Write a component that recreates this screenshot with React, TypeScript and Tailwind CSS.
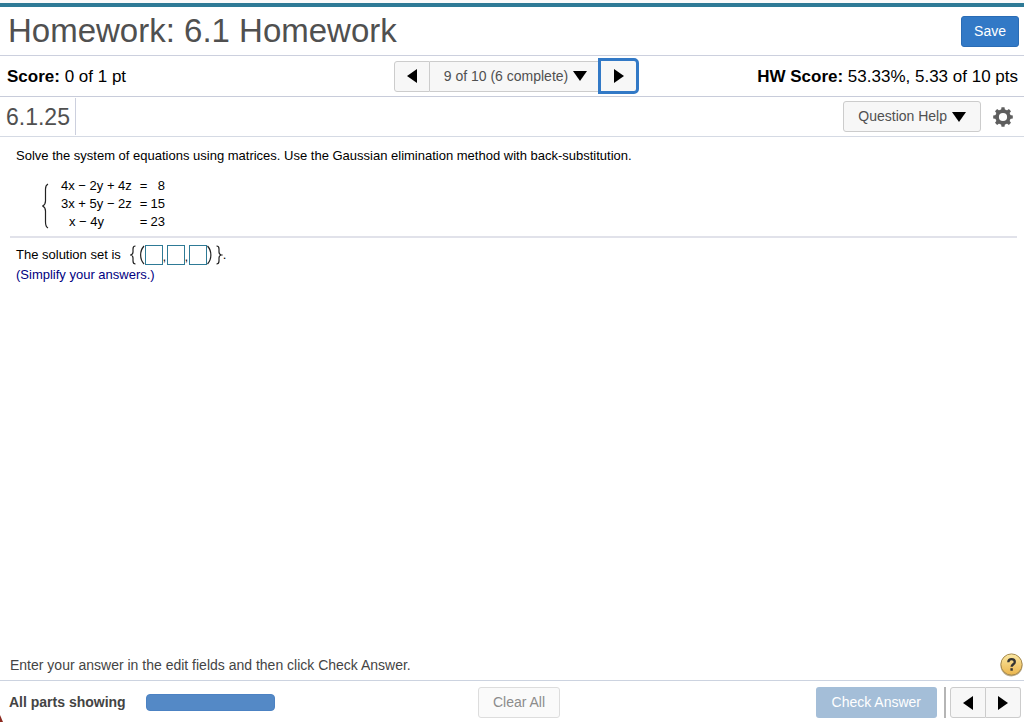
import React, { useState } from "react";

const TEETH = [0, 45, 90, 135, 180, 225, 270, 315];

function Triangle({ dir }: { dir: "left" | "right" | "down" }) {
  if (dir === "down") {
    return (
      <svg width="14" height="10" viewBox="0 0 14 10" aria-hidden="true">
        <path d="M0 0H14L7 10Z" fill="#000" />
      </svg>
    );
  }
  return (
    <svg width="10" height="14" viewBox="0 0 10 14" aria-hidden="true">
      <path d={dir === "left" ? "M10 0V14L0 7Z" : "M0 0V14L10 7Z"} fill="#000" />
    </svg>
  );
}

function Gear() {
  return (
    <svg width="20" height="20" viewBox="0 0 20 20" aria-hidden="true">
      <circle cx="10" cy="10" r="5.9" fill="none" stroke="#5e5e5e" strokeWidth="3.6" />
      {TEETH.map((a) => (
        <path key={a} d="M8 3.4L8.5 0.200H11.500L12 3.400Z" fill="#5e5e5e" transform={`rotate(${a} 10 10)`} />
      ))}
    </svg>
  );
}

function HelpIcon() {
  return (
    <svg width="23" height="24" viewBox="0 0 23 24" aria-hidden="true">
      <defs>
        <linearGradient id="gold" x1="0" y1="0" x2="0" y2="1">
          <stop offset="0" stopColor="#fbe8a4" />
          <stop offset="1" stopColor="#ebb54c" />
        </linearGradient>
      </defs>
      <circle cx="11.5" cy="12.4" r="11" fill="#8f7a4a" opacity="0.6" />
      <circle cx="11.5" cy="11.5" r="10.6" fill="url(#gold)" stroke="#a88b4e" strokeWidth="1" />
      <path
        d="M8.3 9.2C8.4 7.2 9.6 6.2 11.6 6.2C13.6 6.2 14.8 7.3 14.8 8.9C14.8 11.2 11.6 11.3 11.6 13.8"
        fill="none"
        stroke="#333"
        strokeWidth="2.3"
      />
      <rect x="10.4" y="15.2" width="2.4" height="2.5" fill="#333" />
    </svg>
  );
}

function SystemBrace() {
  return (
    <svg
      className="mt-1"
      width="7"
      height="46"
      viewBox="0 0 7 46"
      fill="none"
      stroke="#222"
      strokeWidth="1.2"
      aria-hidden="true"
    >
      <path d="M6 1C4 2 3.5 3.5 3.5 6V18C3.5 20.5 2.5 22 0.7 23C2.5 24 3.5 25.5 3.5 28V39C3.5 42 4 44 6 45" />
    </svg>
  );
}

function Bracket({ d, width }: { d: string; width: number }) {
  return (
    <svg
      width={width}
      height="20"
      viewBox={`0 0 ${width} 20`}
      fill="none"
      stroke="#222"
      strokeWidth="1.2"
      className="shrink-0"
      aria-hidden="true"
    >
      <path d={d} />
    </svg>
  );
}

const BRACE_OPEN = "M5.5 1C3.5 1 3 2 3 4V7C3 8.5 2.5 9.5 0.7 10C2.5 10.5 3 11.5 3 13V16C3 18 3.5 19 5.5 19";
const BRACE_CLOSE = "M3.5 1C5.5 1 6 2 6 4V7C6 8.5 6.500 9.5 8.3 10C6.5 10.5 6 11.5 6 13V16C6 18 5.5 19 3.5 19";

const EQUATIONS = [
  { left: "4x − 2y + 4z", right: "8", indent: "" },
  { left: "3x + 5y − 2z", right: "15", indent: "" },
  { left: "x − 4y", right: "23", indent: "pl-2" },
];

export default function App() {
  const [answers, setAnswers] = useState(["", "", ""]);
  const setAnswer = (i: number, value: string) => setAnswers(answers.map((a, j) => (i === j ? value : a)));

  return (
    <div className="relative flex min-h-screen flex-col bg-white font-['Liberation_Sans',Arial,sans-serif] text-black">
      <div className="h-[3px] bg-[#fafafa]" />
      <header className="flex h-[53px] items-center justify-between border-t-4 border-b border-t-[#2e7a96] border-b-[#ccd0de] pr-[5px] pl-2">
        <h1 className="text-[33px] leading-9 text-[#505050]">Homework: 6.1 Homework</h1>
        <button className="h-[31px] rounded-[3px] border border-[#2a6cb5] bg-[#3279c6] px-3 text-[14px] text-white">Save</button>
      </header>

      <div className="grid h-[41px] grid-cols-[1fr_auto_1fr] items-center border-b border-[#c8ccda] pr-[6px] pl-[7px] text-[17px]">
        <p className="pt-[2px]">
          <b>Score:</b> 0 of 1 pt
        </p>
        <nav aria-label="Questions" className="ml-2 flex items-center">
          <button aria-label="Previous question" className="flex h-[31px] w-9 items-center justify-center rounded-l-[3px] border border-[#ccc] bg-[#f7f7f7]">
            <Triangle dir="left" />
          </button>
          <button className="flex h-[31px] items-center gap-[5px] border-y border-[#ccc] bg-[#f7f7f7] pr-[11px] pl-[14px] text-[14px] text-[#505050]">
            9 of 10 (6 complete) <Triangle dir="down" />
          </button>
          <button aria-label="Next question" className="flex h-9 w-[41px] items-center justify-center rounded-r-[5px] border-3 border-[#3279c6] bg-[#f7f7f7]">
            <Triangle dir="right" />
          </button>
        </nav>
        <p className="pt-[2px] text-right">
          <b>HW Score:</b> 53.33%, 5.33 of 10 pts
        </p>
      </div>

      <div className="flex h-10 items-center justify-between border-b border-[#d5dae4] pr-[11px] pl-[6px]">
        <h2 className="flex h-[37px] items-center border-r border-[#ccd0de] pt-[2px] pr-[5px] text-[23px] text-[#505050]">6.1.25</h2>
        <div className="flex items-center gap-3">
          <button className="flex h-[31px] items-center gap-[5px] rounded-[3px] border border-[#ccc] bg-[#f7f7f7] px-[14px] text-[14px] text-[#505050]">
            Question Help <Triangle dir="down" />
          </button>
          <button aria-label="Settings">
            <Gear />
          </button>
        </div>
      </div>

      <main className="flex-1 pt-[10px] pr-[7px] pl-[10px] text-[13px] leading-[18px]">
        <p className="pl-[6px]">
          Solve the system of equations using matrices. Use the Gaussian elimination method with back-substitution.
        </p>
        <div className="mt-3 flex items-center gap-3 border-b-2 border-[#e1e2ea] pb-[5px] pl-8">
          <SystemBrace />
          <table>
            <tbody>
              {EQUATIONS.map((eq) => (
                <tr key={eq.right}>
                  <td className={`${eq.indent} p-0`}>{eq.left}</td>
                  <td className="py-0 pr-0 pl-2">=</td>
                  <td className="py-0 pr-0 pl-[3px] text-right">{eq.right}</td>
                </tr>
              ))}
            </tbody>
          </table>
        </div>
        <div className="flex items-center pt-[6px] pl-[6px]">
          <span className="mr-[9px]">The solution set is</span>
          <Bracket width={8} d={BRACE_OPEN} />
          <Bracket width={7} d="M6 1C1.5 6 1.5 14 6 19" />
          {answers.map((value, i) => (
            <React.Fragment key={i}>
              {i > 0 && <span className="w-1 pt-1 text-[12px]">,</span>}
              <input
                aria-label={`Answer ${i + 1}`}
                value={value}
                onChange={(e) => setAnswer(i, e.target.value)}
                className="h-5 w-[18px] border border-[#2e7a96] bg-white text-center"
              />
            </React.Fragment>
          ))}
          <Bracket width={6} d="M0.500 1C5 6 5 14 0.500 19" />
          <Bracket width={10} d={BRACE_CLOSE} />
          <span>.</span>
        </div>
        <p className="pl-[6px] text-[#00007f]">(Simplify your answers.)</p>
      </main>

      <div className="flex h-[30px] items-center justify-between pr-[1px] pl-[10px] text-[14px] text-[#444]">
        <p>Enter your answer in the edit fields and then click Check Answer.</p>
        <button aria-label="Help">
          <HelpIcon />
        </button>
      </div>

      <footer className="grid h-[42px] grid-cols-[1fr_auto_1fr] items-center border-t border-[#ccd3e0] pt-[2px] pr-[3px] pl-[9px] text-[14px]">
        <div className="flex items-center gap-5">
          <b className="text-[#444]">All parts showing</b>
          <div className="h-[17px] w-[129px] rounded-[4px] border border-[#4c82c3] bg-[#5489c6]" />
        </div>
        <button disabled className="ml-2 h-[31px] rounded-[3px] border border-[#ddd] bg-[#fafafa] px-[14px] text-[#8c8c8c]">
          Clear All
        </button>
        <div className="flex items-center justify-end">
          <button disabled className="h-[31px] rounded-[3px] bg-[#a4bed8] px-4 text-white">
            Check Answer
          </button>
          <div className="mr-1 ml-[7px] h-[31px] w-[2px] bg-[#b5b5b5]" />
          <button aria-label="Previous part" className="flex h-[31px] w-9 items-center justify-center rounded-l-[3px] border border-[#ccc] bg-[#f7f7f7]">
            <Triangle dir="left" />
          </button>
          <button aria-label="Next part" className="flex h-[31px] w-[35px] items-center justify-center rounded-r-[3px] border border-l-0 border-[#ccc] bg-[#f7f7f7]">
            <Triangle dir="right" />
          </button>
        </div>
      </footer>
      <svg className="absolute bottom-0 left-0" width="3" height="7" viewBox="0 0 3 7" aria-hidden="true">
        <path d="M0 0L3 7H0Z" fill="#8c2a20" />
      </svg>
    </div>
  );
}
